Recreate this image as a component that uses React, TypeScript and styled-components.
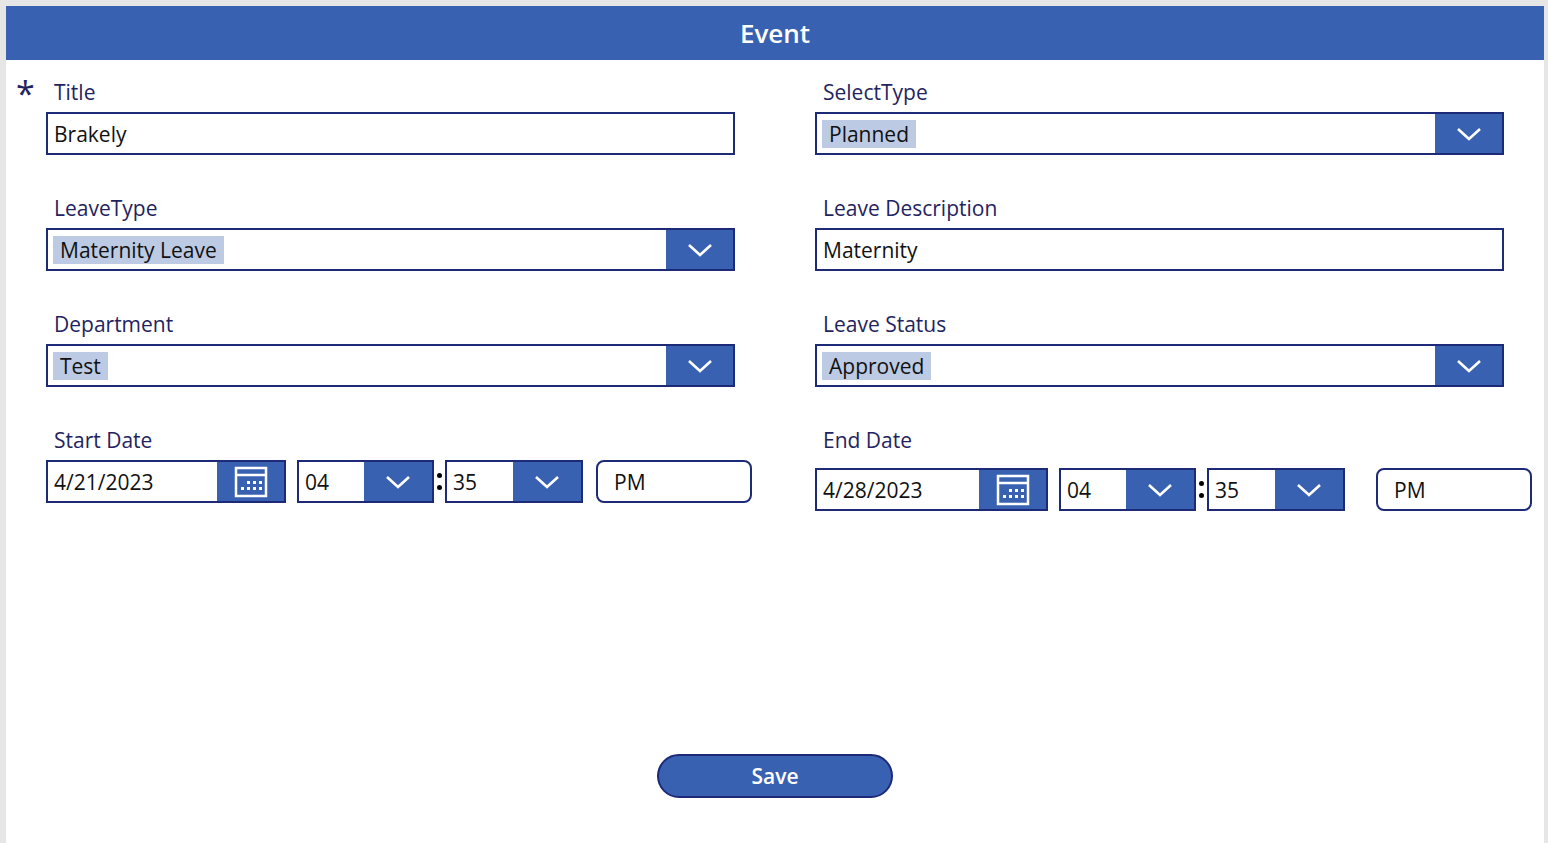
import styled, { createGlobalStyle } from "styled-components";

const Global = createGlobalStyle`
  html, body { margin: 0; background: #e6e6e6; font-family: "Open Sans", "Noto Sans", sans-serif; }
`;

const NAVY = "#1d2a78";
const BLUE = "#3961b2";

const Page = styled.div`
  margin: 6px 4px 0 6px;
  height: 837px;
  background: #fff;
  display: flex;
  flex-direction: column;
  border-top: 0;
`;
const Header = styled.div`
  height: 54px;
  background: ${BLUE};
  color: #fff;
  font-size: 26px;
  font-weight: 600;
  display: flex;
  align-items: center;
  justify-content: center;
`;
const Form = styled.div`
  display: grid;
  grid-template-columns: 769px 1fr;
  padding: 0 0 0 40px;
`;
const Field = styled.div<{ $offset?: number }>`
  position: relative;
  padding-top: ${(p) => 18 + (p.$offset || 0)}px;
  height: ${(p) => 98 - (p.$offset || 0)}px;
`;
const Label = styled.div`
  font-size: 21px;
  color: #1f2460;
  padding-left: 8px;
  height: 28px;
  margin-bottom: 6px;
`;
const Star = styled.span`
  position: absolute;
  left: -30px;
  top: 10px;
  font-size: 34px;
  color: #1f2460;
`;
const Box = styled.div<{ $w: number; $radius?: number }>`
  box-sizing: border-box;
  width: ${(p) => p.$w}px;
  height: 43px;
  border: 2px solid ${NAVY};
  border-radius: ${(p) => p.$radius || 0}px;
  display: flex;
  align-items: stretch;
  font-size: 21px;
  color: #111;
  background: #fff;
`;
const Value = styled.div<{ $pad?: number }>`
  flex: 1;
  display: flex;
  align-items: center;
  padding-left: ${(p) => p.$pad ?? 6}px;
`;
const Chip = styled.span`
  background: #bccbe3;
  padding: 0 7px;
  line-height: 28px;
  margin-left: 5px;
`;
const Btn = styled.div<{ $w: number }>`
  width: ${(p) => p.$w}px;
  background: ${BLUE};
  display: flex;
  align-items: center;
  justify-content: center;
`;
const DateRow = styled.div`
  display: flex;
  align-items: center;
`;
const Colon = styled.div`
  width: 11px;
  display: flex;
  flex-direction: column;
  align-items: center;
  gap: 7px;
  & > i { width: 5px; height: 5px; border-radius: 50%; background: #000; display: block; }
`;
const Footer = styled.div`
  flex: 1;
  display: flex;
  justify-content: center;
  padding-top: 230px;
`;
const Save = styled.button`
  width: 236px;
  height: 44px;
  border-radius: 22px;
  border: 2px solid ${NAVY};
  background: ${BLUE};
  color: #fff;
  font-family: inherit;
  font-size: 21px;
  font-weight: 600;
`;

const Chevron = () => (
  <svg width="26" height="16" viewBox="0 0 26 16">
    <path d="M2 3 L13 13 L24 3" fill="none" stroke="#fff" strokeWidth="2.6" />
  </svg>
);
const Cal = () => (
  <svg width="34" height="32" viewBox="0 0 34 32">
    <rect x="2" y="2" width="30" height="28" fill="none" stroke="#fff" strokeWidth="2.5" />
    <line x1="2" y1="9" x2="32" y2="9" stroke="#fff" strokeWidth="2.5" />
    {[[13, 15], [19, 15], [25, 15], [7, 21], [13, 21], [19, 21], [25, 21]].map(([x, y], i) => (
      <rect key={i} x={x} y={y} width="3" height="3" fill="#fff" />
    ))}
  </svg>
);

const Drop = ({ w, v }: { w: number; v: string }) => (
  <Box $w={w}>
    <Value $pad={0}><Chip>{v}</Chip></Value>
    <Btn $w={67}><Chevron /></Btn>
  </Box>
);

const Times = ({ d, date, gap }: { d: number; date: number; gap: number }) => (
  <DateRow>
    <Box $w={date}>
      <Value>{d === 21 ? "4/21/2023" : "4/28/2023"}</Value>
      <Btn $w={67}><Cal /></Btn>
    </Box>
    <div style={{ width: 11 }} />
    <Box $w={137}>
      <Value>04</Value>
      <Btn $w={68}><Chevron /></Btn>
    </Box>
    <Colon><i /><i /></Colon>
    <Box $w={138}>
      <Value>35</Value>
      <Btn $w={68}><Chevron /></Btn>
    </Box>
    <div style={{ width: gap }} />
    <Box $w={156} $radius={8}>
      <Value $pad={16}>PM</Value>
    </Box>
  </DateRow>
);

export default function App() {
  return (
    <>
      <Global />
      <Page>
        <Header>Event</Header>
        <Form>
          <Field>
            <Star>*</Star>
            <Label>Title</Label>
            <Box $w={689}><Value>Brakely</Value></Box>
          </Field>
          <Field>
            <Label>SelectType</Label>
            <Drop w={689} v="Planned" />
          </Field>
          <Field>
            <Label>LeaveType</Label>
            <Drop w={689} v="Maternity Leave" />
          </Field>
          <Field>
            <Label>Leave Description</Label>
            <Box $w={689}><Value>Maternity</Value></Box>
          </Field>
          <Field>
            <Label>Department</Label>
            <Drop w={689} v="Test" />
          </Field>
          <Field>
            <Label>Leave Status</Label>
            <Drop w={689} v="Approved" />
          </Field>
          <Field>
            <Label>Start Date</Label>
            <Times d={21} date={240} gap={13} />
          </Field>
          <Field $offset={8}>
            <Label style={{ marginTop: -8, marginBottom: 14 }}>End Date</Label>
            <Times d={28} date={233} gap={31} />
          </Field>
        </Form>
        <Footer>
          <Save>Save</Save>
        </Footer>
      </Page>
    </>
  );
}
